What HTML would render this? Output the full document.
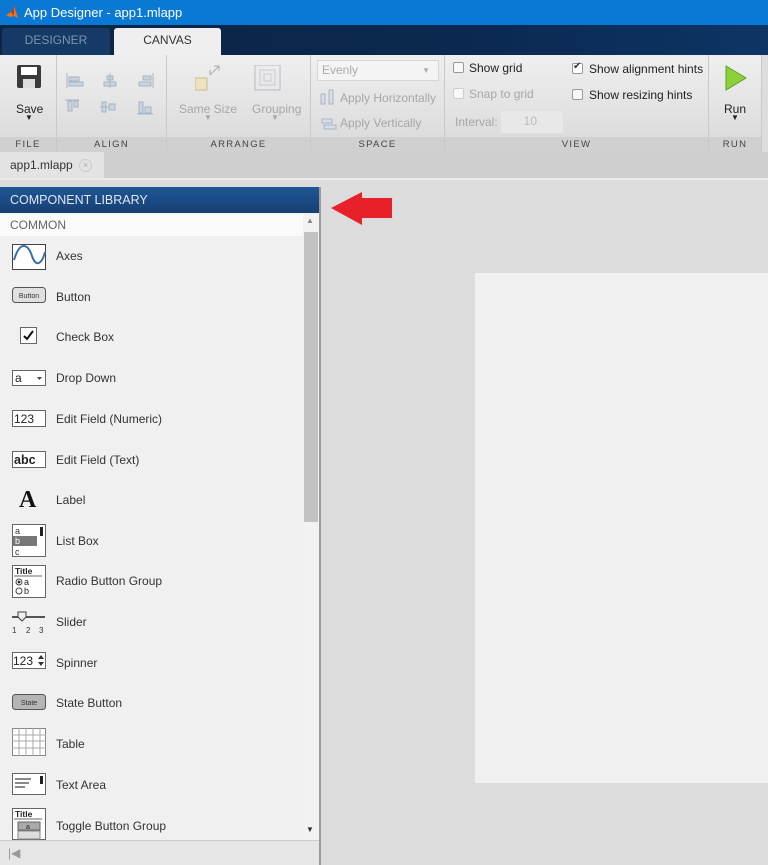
<!DOCTYPE html>
<html><head><meta charset="utf-8">
<style>
*{margin:0;padding:0;box-sizing:border-box}
body{width:768px;height:865px;overflow:hidden;background:#dcdcdc;font-family:"Liberation Sans",Arial,sans-serif;position:relative}
.abs{position:absolute}
#title{left:0;top:0;width:768px;height:25px;background:#0a79d4;color:#fff;font-size:13px;line-height:25px;padding-left:24px}
#tabs{left:0;top:25px;width:768px;height:30px;background:linear-gradient(90deg,#0c2545,#0b2850 60%,#0d3565)}
.tab{position:absolute;top:3px;height:27px;font-size:12px;line-height:25px;text-align:center;border-radius:3px 3px 0 0}
#ribbon{left:0;top:55px;width:768px;height:97px;background:linear-gradient(#efefef,#d9d9d9);border-bottom:1px solid #bdbdbd}
.sec{position:absolute;top:0;height:97px;border-right:1px solid #c9c9c9}
.lbl{position:absolute;left:0;right:0;bottom:0;height:15px;background:#d0d0d0;font-size:9.5px;letter-spacing:1.3px;color:#444;text-align:center;line-height:15px}
.g{color:#a7a7a7;font-size:12px;position:absolute}
.t{color:#222;font-size:12px;position:absolute}
.cb{position:absolute;width:11px;height:11px;border:1px solid #999;background:#f8f8f8;border-radius:2px}
#doc{left:0;top:152px;width:768px;height:28px;background:#cfcfcf;border-bottom:2px solid #ececec}
#lib{left:0;top:187px;width:321px;height:678px;background:#f0f0f0;border-right:2px solid #9a9a9a}
#libh{position:absolute;left:0;top:0;width:319px;height:26px;background:linear-gradient(#1f5797,#173f73);color:#dfe7f2;font-size:12.5px;line-height:26px;padding-left:10px}
.item{position:absolute;left:56px;font-size:12px;color:#333}
.ic{position:absolute;left:12px}
</style></head><body>
<div id="title" class="abs">App Designer - app1.mlapp
<svg class="abs" style="left:5px;top:5px" width="14" height="15"><path d="M1 10 L6 7 L9 1 L13 13 L9 11 L5 12Z" fill="#e8742a"/><path d="M6 7 L9 1 L9 11Z" fill="#b43e10"/></svg></div>
<div id="tabs" class="abs">
<div class="tab" style="left:2px;width:108px;background:#163a66;color:#7c93b0">DESIGNER</div>
<div class="tab" style="left:114px;width:107px;background:#efefef;color:#333">CANVAS</div>
</div>
<div id="ribbon" class="abs">
<div class="sec" style="left:0;width:57px">
<svg class="abs" style="left:17px;top:10px" width="25" height="24"><rect x="0" y="0" width="24" height="23" rx="2" fill="#3a3a3a"/><rect x="4" y="2" width="16" height="8" fill="#fff"/><rect x="6" y="14" width="12" height="9" fill="#ddd"/></svg>
<div class="t" style="left:16px;top:47px">Save</div><div class="t" style="left:25px;top:58px;font-size:8px">▼</div>
<div class="lbl">FILE</div></div>
<div class="sec" style="left:57px;width:110px">
<svg class="abs" style="left:8px;top:18px" width="95" height="45" stroke="#aab5c4" fill="#c8d4e0"><rect x="4" y="4" width="10" height="4"/><rect x="4" y="9" width="14" height="4"/><line x1="2" y1="0" x2="2" y2="15"/><rect x="42" y="3" width="6" height="4"/><rect x="39" y="9" width="12" height="4"/><line x1="45" y1="0" x2="45" y2="15"/><rect x="78" y="3" width="8" height="4"/><rect x="74" y="9" width="12" height="4"/><line x1="88" y1="0" x2="88" y2="15"/><line x1="0" y1="27" x2="14" y2="27"/><rect x="3" y="28" width="4" height="10"/><rect x="9" y="28" width="4" height="6"/><rect x="37" y="29" width="4" height="10"/><line x1="35" y1="34" x2="50" y2="34"/><rect x="44" y="31" width="6" height="6"/><line x1="72" y1="41" x2="88" y2="41"/><rect x="74" y="29" width="4" height="11"/><rect x="80" y="34" width="6" height="6"/></svg>
<div class="lbl">ALIGN</div></div>
<div class="sec" style="left:167px;width:144px">
<svg class="abs" style="left:28px;top:10px" width="100" height="32"><rect x="0" y="13" width="12" height="12" fill="#ede3bf" stroke="#c8bb8e"/><path d="M15 10 L24 1 M19 1 L24 1 L24 6 M15 10 L15 5" stroke="#aab" fill="none"/><rect x="60" y="0" width="25" height="25" fill="none" stroke="#b8b8c8"/><rect x="65" y="5" width="15" height="15" fill="none" stroke="#c8c8d8"/><rect x="69" y="9" width="7" height="7" fill="none" stroke="#c8c8d8"/></svg>
<div class="g" style="left:12px;top:47px">Same Size</div><div class="g" style="left:85px;top:47px">Grouping</div>
<div class="g" style="left:37px;top:58px;font-size:8px">▼</div><div class="g" style="left:104px;top:58px;font-size:8px">▼</div>
<div class="lbl">ARRANGE</div></div>
<div class="sec" style="left:311px;width:134px">
<div class="abs" style="left:6px;top:5px;width:122px;height:21px;background:#f4f4f4;border:1px solid #d6d6d6;font-size:12px;color:#aaa;line-height:19px;padding-left:4px">Evenly<span style="position:absolute;right:8px;font-size:8px">▼</span></div>
<div class="g" style="left:29px;top:36px">Apply Horizontally</div><div class="g" style="left:29px;top:61px">Apply Vertically</div>
<svg class="abs" style="left:8px;top:33px" width="18" height="45" stroke="#a9b4c8" fill="#d6dde8"><rect x="2" y="6" width="4" height="10"/><rect x="10" y="2" width="4" height="14"/><rect x="3" y="31" width="10" height="4"/><rect x="5" y="37" width="12" height="4"/></svg>
<div class="lbl">SPACE</div></div>
<div class="sec" style="left:445px;width:264px">
<div class="cb" style="left:8px;top:7px"></div><div class="t" style="left:24px;top:6px">Show grid</div>
<div class="cb" style="left:8px;top:33px;border-color:#ccc"></div><div class="g" style="left:24px;top:32px">Snap to grid</div>
<div class="g" style="left:10px;top:60px">Interval:</div>
<div class="abs" style="left:56px;top:56px;width:62px;height:22px;background:#e8e8e8;font-size:12px;color:#bbb;text-align:right;padding:3px 26px 0 0">10</div>
<div class="cb" style="left:127px;top:8px;background:#fff"><span style="position:absolute;left:0;top:-3px;font-size:10px;color:#333">✔</span></div><div class="t" style="left:144px;top:7px">Show alignment hints</div>
<div class="cb" style="left:127px;top:34px"></div><div class="t" style="left:144px;top:33px">Show resizing hints</div>
<div class="lbl">VIEW</div></div>
<div class="sec" style="left:709px;width:53px">
<svg class="abs" style="left:15px;top:10px" width="24" height="26"><path d="M2 1 L22 13 L2 25Z" fill="#8cd03a" stroke="#5fa020"/></svg>
<div class="t" style="left:15px;top:47px">Run</div><div class="t" style="left:22px;top:58px;font-size:8px">▼</div>
<div class="lbl">RUN</div></div>
<div class="abs" style="left:762px;top:0;width:6px;height:97px;background:#ddd"></div>
</div>
<div id="doc" class="abs"><div class="abs" style="left:0;top:0;width:104px;height:26px;background:#e3e3e3;font-size:12px;color:#333;line-height:26px;padding-left:10px">app1.mlapp<span style="position:absolute;left:79px;top:7px;width:13px;height:13px;border:1px solid #ccc;border-radius:50%;font-size:9px;line-height:11px;text-align:center;color:#aaa">×</span></div></div>
<svg class="abs" style="left:330px;top:190px" width="64" height="36"><path d="M1 18 L32 2 L32 8 L62 8 L62 28 L32 28 L32 35Z" fill="#e8202a"/></svg>
<div class="abs" style="left:475px;top:273px;width:293px;height:510px;background:#f0f0f0"></div>
<div id="lib" class="abs">
<div id="libh">COMPONENT LIBRARY</div>
<div class="abs" style="left:0;top:27px;width:303px;height:22px;background:#fafafa;font-size:12px;color:#666;line-height:22px;padding-left:10px">COMMON</div>
<div class="abs" style="left:303px;top:27px;width:16px;height:625px;background:#f2f2f2"></div>
<div class="abs" style="left:304px;top:45px;width:14px;height:290px;background:#c2c2c2"></div>
<div class="abs" style="left:306px;top:29px;font-size:8px;color:#888">▲</div>
<div class="abs" style="left:306px;top:638px;font-size:8px;color:#333">▼</div>
<div class="abs" style="left:0;top:653px;width:319px;height:25px;background:#e6e6e6;border-top:1px solid #ccc;font-size:12px;color:#999;padding:5px 0 0 8px">|◀</div>
<!-- icons -->
<svg class="ic" style="top:57px" width="34" height="27"><rect x="0.5" y="0.5" width="33" height="25" fill="#fff" stroke="#444"/><path d="M2 16 C8 -4 16 0 20 12 C24 24 30 20 33 8" stroke="#3a6ea8" stroke-width="2" fill="none"/></svg>
<div class="item" style="top:62px">Axes</div>
<svg class="ic" style="top:100px" width="34" height="17"><rect x="0.5" y="0.5" width="33" height="15" rx="3" fill="#e0e0e0" stroke="#555"/><text x="17" y="11" font-size="7" text-anchor="middle" fill="#333" font-family="Liberation Sans">Button</text></svg>
<div class="item" style="top:103px">Button</div>
<svg class="ic" style="left:20px;top:140px" width="18" height="18"><rect x="0.5" y="0.5" width="16" height="16" fill="#fff" stroke="#666"/><path d="M4 9 L7 12 L13 4" stroke="#111" stroke-width="2" fill="none"/></svg>
<div class="item" style="top:143px">Check Box</div>
<svg class="ic" style="top:183px" width="34" height="16"><rect x="0.5" y="0.5" width="33" height="15" fill="#fff" stroke="#666"/><text x="3" y="12" font-size="12" fill="#222" font-family="Liberation Sans">a</text><path d="M25 7 L30 7 L27.5 10Z" fill="#444"/></svg>
<div class="item" style="top:184px">Drop Down</div>
<svg class="ic" style="top:223px" width="34" height="17"><rect x="0.5" y="0.5" width="33" height="16" fill="#fff" stroke="#666"/><text x="2" y="13" font-size="12" fill="#222" font-family="Liberation Sans">123</text></svg>
<div class="item" style="top:225px">Edit Field (Numeric)</div>
<svg class="ic" style="top:264px" width="34" height="17"><rect x="0.5" y="0.5" width="33" height="16" fill="#fff" stroke="#666"/><text x="2" y="13" font-size="12.5" font-weight="bold" fill="#222" font-family="Liberation Sans">abc</text></svg>
<div class="item" style="top:266px">Edit Field (Text)</div>
<div class="abs" style="left:19px;top:300px;font-family:'Liberation Serif',serif;font-size:24px;font-weight:bold;color:#111">A</div>
<div class="item" style="top:306px">Label</div>
<svg class="ic" style="top:337px" width="34" height="34"><rect x="0.5" y="0.5" width="33" height="32" fill="#fff" stroke="#666"/><rect x="1" y="12" width="24" height="10" fill="#777"/><rect x="28" y="3" width="3" height="9" fill="#222"/><text x="3" y="10" font-size="9" fill="#333" font-family="Liberation Sans">a</text><text x="3" y="20" font-size="9" fill="#fff" font-family="Liberation Sans">b</text><text x="3" y="31" font-size="9" fill="#333" font-family="Liberation Sans">c</text></svg>
<div class="item" style="top:347px">List Box</div>
<svg class="ic" style="top:378px" width="34" height="34"><rect x="0.5" y="0.5" width="33" height="32" fill="#fff" stroke="#666"/><text x="3" y="9" font-size="8.5" font-weight="bold" fill="#222" font-family="Liberation Sans">Title</text><line x1="2" y1="11" x2="30" y2="11" stroke="#666"/><circle cx="7" cy="17" r="3" fill="#fff" stroke="#444"/><circle cx="7" cy="17" r="1.4" fill="#222"/><circle cx="7" cy="26" r="3" fill="#fff" stroke="#444"/><text x="12" y="20" font-size="9" fill="#222" font-family="Liberation Sans">a</text><text x="12" y="29" font-size="9" fill="#222" font-family="Liberation Sans">b</text></svg>
<div class="item" style="top:387px">Radio Button Group</div>
<svg class="ic" style="top:424px" width="36" height="24"><line x1="0" y1="6" x2="33" y2="6" stroke="#555" stroke-width="2"/><path d="M6 1 L14 1 L14 6 L10 10 L6 6Z" fill="#eee" stroke="#444"/><text x="0" y="22" font-size="8" fill="#333" font-family="Liberation Sans">1</text><text x="14" y="22" font-size="8" fill="#333" font-family="Liberation Sans">2</text><text x="27" y="22" font-size="8" fill="#333" font-family="Liberation Sans">3</text></svg>
<div class="item" style="top:428px">Slider</div>
<svg class="ic" style="top:465px" width="34" height="17"><rect x="0.5" y="0.5" width="33" height="16" fill="#fff" stroke="#666"/><text x="1" y="13" font-size="12" fill="#222" font-family="Liberation Sans">123</text><path d="M26 7 L29 3 L32 7Z M26 10 L32 10 L29 14Z" fill="#333"/></svg>
<div class="item" style="top:469px">Spinner</div>
<svg class="ic" style="top:507px" width="34" height="17"><rect x="0.5" y="0.5" width="33" height="15" rx="3" fill="#b5b5b5" stroke="#555"/><text x="17" y="11" font-size="7" text-anchor="middle" fill="#333" font-family="Liberation Sans">State</text></svg>
<div class="item" style="top:509px">State Button</div>
<svg class="ic" style="top:541px" width="34" height="28"><rect x="0.5" y="0.5" width="33" height="27" fill="#fff" stroke="#888"/><path d="M0 7H34M0 13H34M0 20H34M7 0V28M14 0V28M21 0V28M28 0V28" stroke="#aaa"/></svg>
<div class="item" style="top:550px">Table</div>
<svg class="ic" style="top:586px" width="34" height="22"><rect x="0.5" y="0.5" width="33" height="21" fill="#fff" stroke="#666"/><path d="M3 6H19M3 10H17M3 14H13" stroke="#444" stroke-width="1.3"/><rect x="28" y="3" width="3" height="8" fill="#222"/></svg>
<div class="item" style="top:591px">Text Area</div>
<svg class="ic" style="top:621px" width="34" height="32"><rect x="0.5" y="0.5" width="33" height="31" fill="#fff" stroke="#666"/><text x="3" y="9" font-size="8.5" font-weight="bold" fill="#222" font-family="Liberation Sans">Title</text><line x1="2" y1="11" x2="30" y2="11" stroke="#666"/><rect x="6" y="14" width="22" height="8" fill="#aaa" stroke="#666"/><rect x="6" y="23" width="22" height="8" fill="#ddd" stroke="#888"/><text x="14" y="21" font-size="7" fill="#222" font-family="Liberation Sans">a</text></svg>
<div class="item" style="top:632px">Toggle Button Group</div>
</div>
</body></html>
